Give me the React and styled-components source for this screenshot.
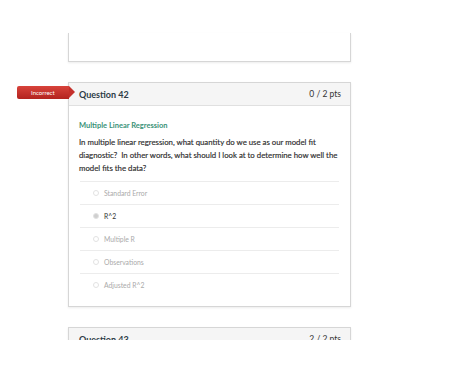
import React from "react";
import styled, { createGlobalStyle } from "styled-components";

const Global = createGlobalStyle`
  html, body { margin: 0; padding: 0; background: #fff; }
  body { font-family: Lato, "Open Sans", sans-serif; color: #333; }
`;

const Page = styled.div`
  width: 474px;
  height: 387px;
  background: #fff;
`;

const Viewport = styled.div`
  height: 340px;
  overflow: hidden;
  padding-top: 33px;
  box-sizing: border-box;
  display: flex;
  flex-direction: column;
  gap: 20px;
  padding-left: 68px;
`;

const Card = styled.div`
  position: relative;
  width: 283px;
  box-sizing: border-box;
  border: 1px solid #d6d6d6;
  background: #fff;
  box-shadow: 0 1px 2px rgba(0, 0, 0, 0.08);
  flex-shrink: 0;
`;

const TopStub = styled(Card)`
  height: 29px;
  border-top: none;
`;

const Header = styled.div`
  height: 23px;
  box-sizing: border-box;
  background: #f5f5f5;
  border-bottom: 1px solid #e0e0e0;
  display: flex;
  align-items: center;
  justify-content: space-between;
  padding: 0 9px 0 10px;
`;

const Title = styled.div`
  font-weight: 700;
  font-size: 9px;
  color: #2d3b45;
`;

const Pts = styled.div`
  font-size: 8.5px;
  color: #333;
`;

const Tag = styled.div`
  position: absolute;
  left: -52px;
  top: 3px;
  height: 13px;
  width: 52px;
  background: linear-gradient(#d8433b, #b3231f);
  color: #fff;
  font-size: 6px;
  display: flex;
  align-items: center;
  padding-left: 14px;
  box-sizing: border-box;
  border-radius: 2px 0 0 2px;
  &::after {
    content: "";
    position: absolute;
    right: -6px;
    top: 0;
    border-top: 6.5px solid transparent;
    border-bottom: 6.5px solid transparent;
    border-left: 6px solid #c4302b;
  }
`;

const Body = styled.div`
  padding: 15px 10px 10px 10px;
`;

const Topic = styled.div`
  font-weight: 700;
  font-size: 7.5px;
  color: #3a9277;
  margin-bottom: 6px;
`;

const Text = styled.div`
  font-size: 7.8px;
  line-height: 13px;
  color: #2d2d2d;
  font-weight: 400;
  margin-bottom: 6px;
  -webkit-text-stroke: 0.15px #2d2d2d;
`;

const Answers = styled.div`
  margin: 0 1px;
`;

const Answer = styled.div`
  height: 22px;
  border-top: 1px solid #ececec;
  display: flex;
  align-items: center;
  padding-left: 13px;
  gap: 5px;
  font-size: 6.8px;
  color: ${(p) => (p.$selected ? "#333" : "#aaa")};
`;

const Radio = styled.span`
  width: 4px;
  height: 4px;
  border-radius: 50%;
  border: 1px solid #e2e2e2;
  background: ${(p) => (p.$selected ? "#cfcfcf" : "#fff")};
  box-sizing: content-box;
`;

const answers = ["Standard Error", "R^2", "Multiple R", "Observations", "Adjusted R^2"];

export default function App() {
  return (
    <Page>
      <Global />
      <Viewport>
        <TopStub />
        <Card>
          <Tag>Incorrect</Tag>
          <Header>
            <Title>Question 42</Title>
            <Pts>0 / 2 pts</Pts>
          </Header>
          <Body>
            <Topic>Multiple Linear Regression</Topic>
            <Text>
              In multiple linear regression, what quantity do we use as our model fit
              diagnostic?&nbsp; In other words, what should I look at to determine how well the
              model fits the data?
            </Text>
            <Answers>
              {answers.map((a) => (
                <Answer key={a} $selected={a === "R^2"}>
                  <Radio $selected={a === "R^2"} />
                  {a}
                </Answer>
              ))}
            </Answers>
          </Body>
        </Card>
        <Card>
          <Header>
            <Title>Question 43</Title>
            <Pts>2 / 2 pts</Pts>
          </Header>
        </Card>
      </Viewport>
    </Page>
  );
}
